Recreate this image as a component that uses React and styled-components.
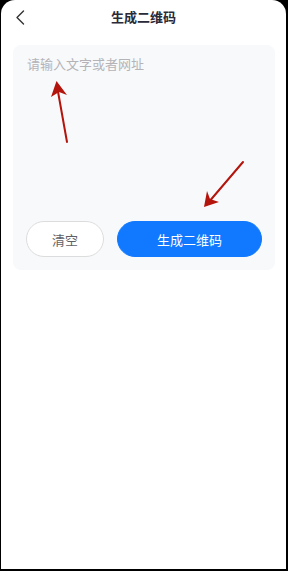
import React from "react";
import styled, { createGlobalStyle } from "styled-components";

const Global = createGlobalStyle`
  html, body { margin: 0; padding: 0; background: #000; }
  body { font-family: "Noto Sans CJK SC", "Noto Sans", sans-serif; }
  * { box-sizing: border-box; }
`;

const Frame = styled.div`
  position: relative;
  width: 288px;
  height: 571px;
  background: #000;
  padding: 0 2px 2px 1px;
`;

const Screen = styled.div`
  width: 100%;
  height: 100%;
  background: #fff;
  border-radius: 14px 14px 0 0;
  display: flex;
  flex-direction: column;
  overflow: hidden;
`;

const Header = styled.div`
  position: relative;
  height: 34px;
  display: flex;
  align-items: center;
  justify-content: center;
  flex-shrink: 0;
`;

const BackButton = styled.button`
  position: absolute;
  left: 12px;
  top: 9px;
  width: 14px;
  height: 17px;
  padding: 0;
  border: none;
  background: none;
  display: flex;
  align-items: center;
  justify-content: center;
`;

const Title = styled.h1`
  margin: 0;
  font-size: 13px;
  font-weight: 600;
  color: #2a2a38;
  line-height: 18px;
`;

const Card = styled.div`
  margin: 11px 11px 0 12px;
  background: #f8f9fb;
  border-radius: 8px;
  padding: 10px 13px 13px;
  display: flex;
  flex-direction: column;
`;

const TextInput = styled.textarea`
  height: 166px;
  border: none;
  outline: none;
  resize: none;
  background: transparent;
  margin: 0;
  padding: 0 1px;
  font-family: "Noto Sans CJK SC", sans-serif;
  font-size: 13px;
  line-height: 18px;
  color: #333;
  &::placeholder { color: #b4b4b8; }
`;

const ButtonRow = styled.div`
  display: flex;
  gap: 13px;
`;

const PillButton = styled.button`
  height: 36px;
  border-radius: 18px;
  font-family: "Noto Sans CJK SC", sans-serif;
  font-size: 13px;
  padding: 0;
  display: flex;
  align-items: center;
  justify-content: center;
  border: 1px solid ${(p) => (p.$primary ? "#1179ff" : "#dcdcdc")};
  background: ${(p) => (p.$primary ? "#1179ff" : "#fff")};
  color: ${(p) => (p.$primary ? "#fff" : "#5f5f66")};
  width: ${(p) => (p.$primary ? "auto" : "78px")};
  flex: ${(p) => (p.$primary ? "1" : "none")};
`;

const Annotations = styled.svg`
  position: absolute;
  left: 0;
  top: 0;
  pointer-events: none;
`;

export default function App() {
  return (
    <>
      <Global />
      <Frame>
        <Screen>
          <Header>
            <BackButton aria-label="返回">
              <svg width="10" height="15" viewBox="0 0 10 15">
                <path d="M8.5 1 L2 7.5 L8.5 14" fill="none" stroke="#333" strokeWidth="1.4" strokeLinecap="round" strokeLinejoin="round" />
              </svg>
            </BackButton>
            <Title>生成二维码</Title>
          </Header>
          <Card>
            <TextInput placeholder="请输入文字或者网址" />
            <ButtonRow>
              <PillButton>清空</PillButton>
              <PillButton $primary>生成二维码</PillButton>
            </ButtonRow>
          </Card>
        </Screen>
        <Annotations width="288" height="571" viewBox="0 0 288 571">
          <g stroke="#b3140c" strokeWidth="2" fill="#b3140c" strokeLinecap="round">
            <line x1="67" y1="142" x2="57" y2="86" />
            <polygon points="56.5,81 51,97 59,92 67,95" stroke="none" />
            <line x1="243" y1="162" x2="208" y2="203" />
            <polygon points="204,207 207,191 210,199 219,202" stroke="none" />
          </g>
        </Annotations>
      </Frame>
    </>
  );
}
